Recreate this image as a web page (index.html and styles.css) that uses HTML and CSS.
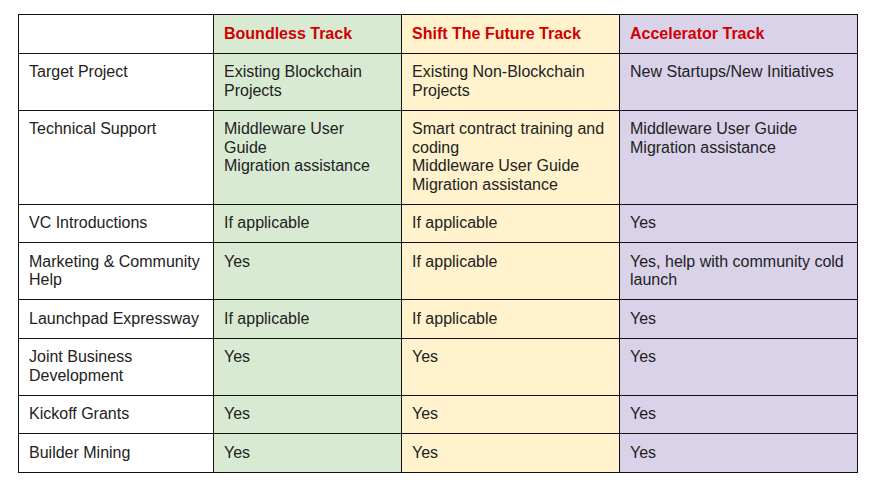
FILE: index.html
```html
<!DOCTYPE html>
<html lang="en">
<head>
<meta charset="utf-8">
<title>Tracks</title>
<link rel="stylesheet" href="styles.css">
</head>
<body>
<div class="page">
<table class="tracks">
  <colgroup>
    <col class="c1"><col class="c2"><col class="c3"><col class="c4">
  </colgroup>
  <thead>
    <tr>
      <th class="blank"></th>
      <th class="green">Boundless Track</th>
      <th class="yellow">Shift The Future Track</th>
      <th class="purple">Accelerator Track</th>
    </tr>
  </thead>
  <tbody>
    <tr>
      <td>Target Project</td>
      <td class="green">Existing Blockchain Projects</td>
      <td class="yellow">Existing Non-Blockchain Projects</td>
      <td class="purple">New Startups/New Initiatives</td>
    </tr>
    <tr>
      <td>Technical Support</td>
      <td class="green">Middleware User Guide<br>Migration assistance</td>
      <td class="yellow">Smart contract training and coding<br>Middleware User Guide<br>Migration assistance</td>
      <td class="purple">Middleware User Guide<br>Migration assistance</td>
    </tr>
    <tr>
      <td>VC Introductions</td>
      <td class="green">If applicable</td>
      <td class="yellow">If applicable</td>
      <td class="purple">Yes</td>
    </tr>
    <tr>
      <td>Marketing &amp; Community Help</td>
      <td class="green">Yes</td>
      <td class="yellow">If applicable</td>
      <td class="purple">Yes, help with community cold launch</td>
    </tr>
    <tr>
      <td>Launchpad Expressway</td>
      <td class="green">If applicable</td>
      <td class="yellow">If applicable</td>
      <td class="purple">Yes</td>
    </tr>
    <tr>
      <td>Joint Business Development</td>
      <td class="green">Yes</td>
      <td class="yellow">Yes</td>
      <td class="purple">Yes</td>
    </tr>
    <tr>
      <td>Kickoff Grants</td>
      <td class="green">Yes</td>
      <td class="yellow">Yes</td>
      <td class="purple">Yes</td>
    </tr>
    <tr>
      <td>Builder Mining</td>
      <td class="green">Yes</td>
      <td class="yellow">Yes</td>
      <td class="purple">Yes</td>
    </tr>
  </tbody>
</table>
</div>
</body>
</html>
```
FILE: styles.css
```css
html, body {
  margin: 0;
  padding: 0;
  background: #ffffff;
}

.page {
  padding: 14px 0 0 18px;
}

.tracks {
  border-collapse: collapse;
  table-layout: fixed;
  width: 839px;
  font-family: "Liberation Sans", Arial, sans-serif;
  font-size: 16px;
  line-height: 18.5px;
  color: #222222;
}

.c1 { width: 195px; }
.c2 { width: 188px; }
.c3 { width: 218px; }
.c4 { width: 238px; }

.tracks th,
.tracks td {
  border: 1px solid #111111;
  padding: 9.5px 12px 9.5px 10px;
  text-align: left;
  vertical-align: top;
}

.tracks th {
  font-weight: bold;
  color: #d00000;
}

.green { background: #d9ead3; }
.yellow { background: #fff2cc; }
.purple { background: #d9d2e9; }
```
